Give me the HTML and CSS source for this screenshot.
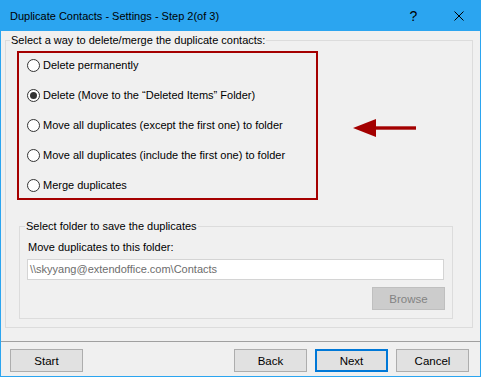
FILE: index.html
```html
<!DOCTYPE html>
<html lang="en">
<head>
    <meta charset="UTF-8">
    <meta name="viewport" content="width=device-width, initial-scale=1.0">
    <title>Duplicate Contacts - Settings - Step 2(of 3)</title>
    <link rel="stylesheet" href="styles.css">
</head>
<body>
    <div class="window">
        <div class="titlebar">
            <span class="title">Duplicate Contacts - Settings - Step 2(of 3)</span>
            <span class="caption-btn">?</span>
            <span class="caption-btn">
                <svg width="10" height="10" viewBox="0 0 10 10">
                    <path d="M0.5 0.5 L9.5 9.5 M9.5 0.5 L0.5 9.5" stroke="#000" stroke-width="1" fill="none"/>
                </svg>
            </span>
        </div>

        <div class="content">
            <fieldset class="group main-group">
                <legend>Select a way to delete/merge the duplicate contacts:</legend>

                <div class="options-row">
                    <div class="options">
                        <label class="option"><span class="radio"></span>Delete permanently</label>
                        <label class="option"><span class="radio checked"></span>Delete (Move to the “Deleted Items” Folder)</label>
                        <label class="option"><span class="radio"></span>Move all duplicates (except the first one) to folder</label>
                        <label class="option"><span class="radio"></span>Move all duplicates (include the first one) to folder</label>
                        <label class="option"><span class="radio"></span>Merge duplicates</label>
                    </div>
                    <svg class="arrow" width="64" height="20" viewBox="0 0 64 20">
                        <polygon points="0,10 23,1 23,19" fill="#a30000"/>
                        <rect x="22" y="8.3" width="41" height="3.4" fill="#a30000"/>
                    </svg>
                </div>

                <fieldset class="group folder-group">
                    <legend>Select folder to save the duplicates</legend>
                    <div class="field-label">Move duplicates to this folder:</div>
                    <div class="textbox">\\skyyang@extendoffice.com\Contacts</div>
                    <div class="browse-row">
                        <button class="btn" disabled>Browse</button>
                    </div>
                </fieldset>
            </fieldset>
        </div>

        <div class="footer">
            <button class="btn">Start</button>
            <div class="spacer"></div>
            <button class="btn">Back</button>
            <button class="btn default">Next</button>
            <button class="btn">Cancel</button>
        </div>
    </div>
</body>
</html>
```

FILE: styles.css
```css
* {
    box-sizing: border-box;
}
body {
    margin: 0;
    font-family: "Liberation Sans", Arial, sans-serif;
    font-size: 11px;
    color: #000;
}
.window {
    width: 481px;
    height: 377px;
    background-color: #f0f0f0;
    border: 1px solid #2ba5f0;
    border-top: none;
    display: flex;
    flex-direction: column;
}
.titlebar {
    height: 31px;
    background-color: #2ba5f0;
    display: flex;
    align-items: center;
    padding-left: 10px;
    margin: 0 -1px;
}
.title {
    flex: 1;
}
.caption-btn {
    width: 45px;
    height: 31px;
    display: flex;
    align-items: center;
    justify-content: center;
    font-size: 14px;
}
.content {
    padding: 1px 7px 0 4px;
}
.group {
    margin: 0;
    padding: 0;
    border: 1px solid #dcdcdc;
    min-width: 0;
}
.group legend {
    padding: 0 1px;
    margin-left: 4px;
    line-height: 16px;
}
.main-group {
    padding-bottom: 8px;
}
.options-row {
    display: flex;
    align-items: flex-start;
    margin: 3px 0 0 11px;
}
.options {
    width: 301px;
    border: 2px solid #a50000;
    padding: 1px 0 2px 8px;
    display: flex;
    flex-direction: column;
    gap: 8px;
}
.option {
    height: 22px;
    display: flex;
    align-items: center;
    white-space: nowrap;
}
.radio {
    width: 13px;
    height: 13px;
    border: 1px solid #333;
    border-radius: 50%;
    background-color: #fff;
    margin-right: 3px;
    display: flex;
    align-items: center;
    justify-content: center;
    flex-shrink: 0;
}
.radio.checked::after {
    content: "";
    width: 7px;
    height: 7px;
    border-radius: 50%;
    background-color: #333;
}
.arrow {
    margin: 67px 0 0 35px;
}
.folder-group {
    margin: 18px 19px 0 13px;
    padding: 0 8px 8px 7px;
}
.folder-group legend {
    margin-left: -2px;
}
.field-label {
    line-height: 16px;
    margin: 5px 0 0 1px;
}
.textbox {
    height: 21px;
    margin-top: 4px;
    background-color: #fff;
    border: 1px solid #d4d4d4;
    padding-left: 2px;
    line-height: 19px;
    color: #6d6d6d;
}
.browse-row {
    display: flex;
    justify-content: flex-end;
    margin: 7px -1px 0 0;
}
.btn {
    width: 73px;
    height: 23px;
    padding: 0;
    font-family: inherit;
    font-size: 11.5px;
    color: #000;
    background-color: #e1e1e1;
    border: 1px solid #adadad;
}
.btn:disabled {
    background-color: #cccccc;
    border-color: #bfbfbf;
    color: #838383;
}
.btn.default {
    border: 2px solid #0078d7;
}
.footer {
    margin: 13px 0 0 0;
    border-top: 1px solid #a0a0a0;
    padding: 7px 11px 0 9px;
    display: flex;
    gap: 8px;
}
.spacer {
    flex: 1;
}
```
